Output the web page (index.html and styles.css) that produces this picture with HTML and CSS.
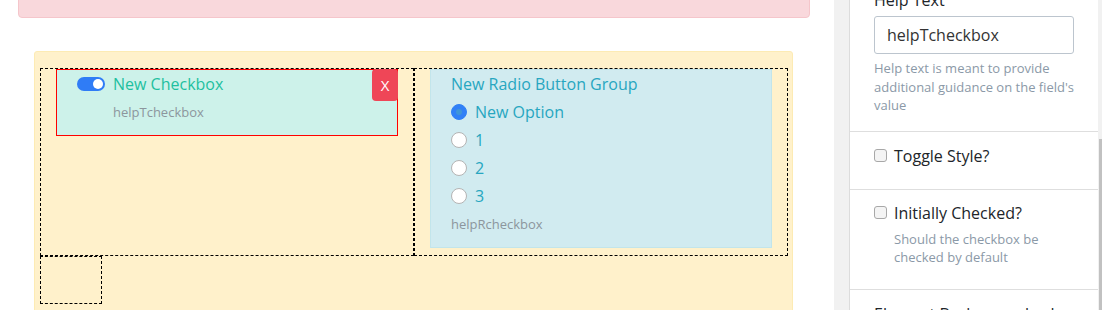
FILE: index.html
```html
<!DOCTYPE html>
<html>
<head>
<meta charset="utf-8">
<link rel="stylesheet" href="styles.css">
</head>
<body>
<div class="page">
  <div class="main">
    <div class="alert"></div>
    <div class="canvas">
      <div class="row">
        <div class="col">
          <div class="card card-check">
            <div class="line">
              <span class="toggle"><span class="knob"></span></span>
              <span class="title-check">New Checkbox</span>
            </div>
            <div class="help help-check">helpTcheckbox</div>
            <div class="remove">X</div>
          </div>
        </div>
        <div class="col col-pad">
          <div class="card card-radio">
            <div class="line title-radio">New Radio Button Group</div>
            <div class="line radio-row"><span class="radio on"><span class="dot"></span></span><span>New Option</span></div>
            <div class="line radio-row"><span class="radio"></span><span>1</span></div>
            <div class="line radio-row"><span class="radio"></span><span>2</span></div>
            <div class="line radio-row"><span class="radio"></span><span>3</span></div>
            <div class="help help-radio">helpRcheckbox</div>
          </div>
        </div>
      </div>
      <div class="empty-cell"></div>
    </div>
  </div>
  <div class="strip"></div>
  <div class="panel">
    <div class="section s1">
      <div class="label">Help Text</div>
      <div class="input">helpTcheckbox</div>
      <div class="hint wide">Help text is meant to provide additional guidance on the field's value</div>
    </div>
    <div class="section s2">
      <div class="check-row"><span class="box"></span><span>Toggle Style?</span></div>
    </div>
    <div class="section s3">
      <div class="check-row"><span class="box"></span><span>Initially Checked?</span></div>
      <div class="hint indent">Should the checkbox be checked by default</div>
    </div>
    <div class="section s4">
      <div class="label">Element Background color</div>
    </div>
  </div>
  <div class="scroll"><div class="thumb"></div></div>
</div>
</body>
</html>
```
FILE: styles.css
```css
* { box-sizing: border-box; }
html, body { margin: 0; padding: 0; }
body {
  font-family: "Open Sans", "Noto Sans", sans-serif;
  color: #212529;
  background: #fff;
  width: 1102px;
  height: 310px;
  overflow: hidden;
}
.page { display: flex; height: 310px; }
.main { width: 834px; flex: none; }
.alert {
  margin: -30px 24px 0 18px;
  height: 48px;
  background: #f9d8dc;
  border: 1px solid #f5c6cb;
  border-radius: 4px;
}
.canvas {
  margin: 33px 41px 0 34px;
  height: 300px;
  background: #fff1cb;
  border: 1px solid #fdebb4;
  border-radius: 3px;
  padding: 16px 4px 0 5px;
}
.row { display: flex; }
.col {
  width: 374px;
  border: 1px dashed #000;
  padding: 0 15px;
}
.col-pad { padding-bottom: 7px; }
.card {
  position: relative;
  padding: 2px 20px 12px;
  font-size: 16px;
  line-height: 24px;
}
.card-check { background: #cdf2ea; border: 1px solid #f00; }
.card-radio { background: #d1ebf0; border: 1px solid #c2e5eb; color: #27a6c0; }
.line { display: flex; align-items: center; height: 24px; margin-bottom: 4px; }
.title-check { color: #1ec09f; margin-left: 8px; }
.toggle {
  width: 28px; height: 14px;
  border-radius: 7px;
  background: #2f7cf6;
  display: flex; align-items: center; justify-content: flex-end;
  padding-right: 2px;
}
.knob { width: 10px; height: 10px; border-radius: 50%; background: #fff; }
.help {
  font-size: 13px;
  line-height: 19.5px;
  color: #8c969d;
  margin-top: 7px;
}
.help-check { padding-left: 36px; }
.remove {
  position: absolute;
  top: -1px; right: -1px;
  width: 26px; height: 32px;
  background: #ef4657;
  color: #fff;
  border-radius: 4px;
  font-size: 15px;
  display: flex; align-items: center; justify-content: center;
}
.radio {
  width: 16px; height: 16px;
  border-radius: 50%;
  background: #fff;
  border: 1px solid #b4b4b4;
  margin-right: 8px;
  display: flex; align-items: center; justify-content: center;
}
.radio.on { background: #3080f6; border-color: #3080f6; }
.dot { width: 6px; height: 6px; border-radius: 50%; background: #3f95d8; }
.empty-cell {
  width: 62px; height: 48px;
  border: 1px dashed #000;
}
.strip {
  width: 16px; flex: none;
  background: #f1f1f1;
  border-right: 1px solid #dcdcdc;
}
.panel { width: 248px; flex: none; background: #fff; }
.section { padding: 0 24px 0 24px; border-bottom: 1px solid #dedede; }
.label { font-size: 16px; line-height: 24px; color: #212529; white-space: nowrap; }
.s1 { padding-bottom: 16px; }
.s1 .label { margin-top: -12px; }
.input {
  margin-top: 4px;
  width: 200px; height: 38px;
  border: 1px solid #bcc5ce;
  border-radius: 3px;
  padding: 0 12px;
  font-size: 16px;
  line-height: 36px;
  color: #333;
}
.hint {
  margin-top: 5px;
  font-size: 13px;
  line-height: 18.5px;
  color: #8b99a7;
}
.wide { margin-right: -12px; }
.indent { padding-left: 20px; }
.check-row { display: flex; align-items: center; height: 24px; font-size: 16px; }
.box {
  width: 13px; height: 13px;
  border: 1px solid #a8a8a8;
  border-radius: 3px;
  background: #f4f4f4;
  margin-right: 7px;
}
.s2 { padding-top: 12px; padding-bottom: 21px; }
.s3 { padding-top: 11px; padding-bottom: 22px; }
.s4 { border-bottom: none; padding-top: 12px; }
.scroll { width: 4px; flex: none; background: #f1f1f1; padding-top: 139px; padding-left: 1px; }
.thumb { width: 3px; height: 200px; background: #c1c1c1; }
```
